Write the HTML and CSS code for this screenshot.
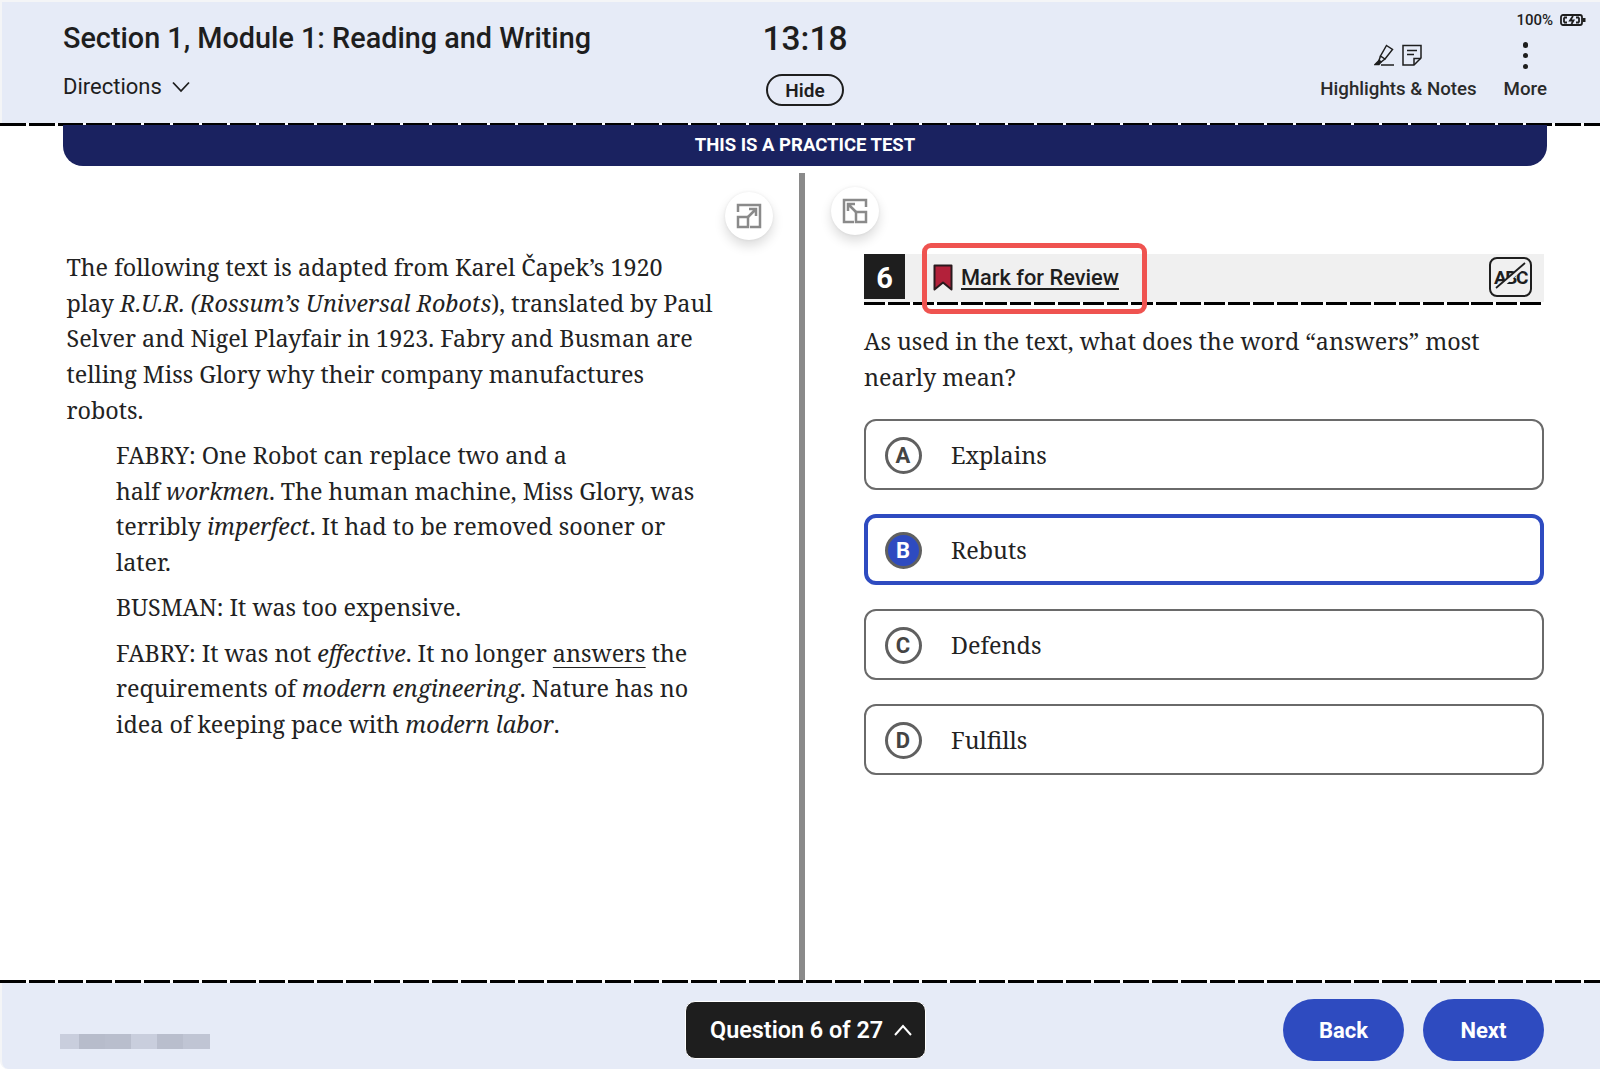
FILE: index.html
```html
<!DOCTYPE html>
<html lang="en">
<head>
<meta charset="utf-8">
<title>Section 1, Module 1: Reading and Writing</title>
<link rel="stylesheet" href="styles.css">
</head>
<body>
<div class="app">
  <header class="topbar">
    <div class="top-left">
      <div class="section-title">Section 1, Module 1: Reading and Writing</div>
      <div class="directions">Directions
        <svg class="chev" width="20" height="12" viewBox="0 0 20 12"><path d="M2 1.500 10 10 18 1.500"/></svg>
      </div>
    </div>
    <div class="top-center">
      <div class="timer">13:18</div>
      <button class="hide">Hide</button>
    </div>
    <div class="top-right">
      <div class="tool tool-notes">
        <div class="tool-icons">
          <svg width="20" height="22" viewBox="0 0 20 22" class="ink"><path d="M12.500 1.500 18.500 5.500 11 15 6.500 12Z"/><path d="M6.500 12 5 16.500 7 18 11 15"/><path d="M5 16.500 1 20.500H5L7 18Z" class="solid"/><path d="M7 21H20"/></svg>
          <svg width="20" height="22" viewBox="0 0 20 22" class="ink"><path d="M19 14V1.500H1V21H12Z"/><path d="M12 21V14.500H19"/><path d="M5 6.500H15M5 10.500H12"/></svg>
        </div>
        <span>Highlights &amp; Notes</span>
      </div>
      <div class="tool tool-more">
        <div class="dots"><i></i><i></i><i></i></div>
        <span>More</span>
      </div>
    </div>
    <div class="status">100%
      <svg width="26" height="12" viewBox="0 0 26 12" class="ink batt"><rect x="1" y="1" width="21" height="10" rx="2"/><path d="M4 3.500V8.500M7 3.500H4M7 8.500H4M19 3.500V8.500M16 3.500H19M16 8.500H19M13 2 10 6.500H13.500L11.500 10"/><path d="M24 4V8" class="thick"/></svg>
    </div>
  </header>
  <div class="dash"></div>
  <div class="banner">THIS IS A PRACTICE TEST</div>
  <main class="panes">
    <section class="pane-left">
      <div class="expand-row">
        <div class="round-btn">
          <svg width="26" height="26" viewBox="0 0 26 26" class="grey"><path d="M2 9V2H24V24H14"/><rect x="2" y="14" width="10" height="10"/><path d="M12 14 20 6M13 6H20V13"/></svg>
        </div>
      </div>
      <div class="passage">
        <p class="intro">The following text is adapted from Karel Čapek’s 1920<br>play <em>R.U.R. (Rossum’s Universal Robots</em>), translated by Paul<br>Selver and Nigel Playfair in 1923. Fabry and Busman are<br>telling Miss Glory why their company manufactures<br>robots.</p>
        <p class="speech">FABRY: One Robot can replace two and a<br>half <em>workmen</em>. The human machine, Miss Glory, was<br>terribly <em>imperfect</em>. It had to be removed sooner or<br>later.</p>
        <p class="speech">BUSMAN: It was too expensive.</p>
        <p class="speech">FABRY: It was not <em>effective</em>. It no longer <u>answers</u> the<br>requirements of <em>modern engineering</em>. Nature has no<br>idea of keeping pace with <em>modern labor</em>.</p>
      </div>
    </section>
    <div class="divider"></div>
    <section class="pane-right">
      <div class="round-btn collapse">
        <svg width="26" height="26" viewBox="0 0 26 26" class="grey"><path d="M24 9V2H2V24H12"/><rect x="14" y="14" width="10" height="10"/><path d="M14 14 6 6M13 6H6V13"/></svg>
      </div>
      <div class="q-head">
        <div class="q-num">6</div>
        <div class="mark">
          <svg width="20" height="27" viewBox="0 0 20 27"><path d="M1.500 1.500H18.500V25.500L10 18.500 1.500 25.500Z" fill="#b3213a" stroke="#2a1a1e" stroke-width="2" stroke-linejoin="round"/></svg>
          <span>Mark for Review</span>
          <div class="highlight-box"></div>
        </div>
        <div class="abc"><span>ABC</span>
          <svg width="38" height="34" viewBox="0 0 38 34" class="strike"><path d="M5 30 33 5" stroke="#f0f0f0" stroke-width="4"/><path d="M4 28 33 3" stroke="#1e1e1e" stroke-width="1.800"/></svg>
        </div>
      </div>
      <div class="q-dash"></div>
      <p class="question">As used in the text, what does the word “answers” most<br>nearly mean?</p>
      <div class="options">
        <div class="option"><span class="letter">A</span><span>Explains</span></div>
        <div class="option selected"><span class="letter">B</span><span>Rebuts</span></div>
        <div class="option"><span class="letter">C</span><span>Defends</span></div>
        <div class="option"><span class="letter">D</span><span>Fulfills</span></div>
      </div>
    </section>
  </main>
  <div class="dash"></div>
  <footer class="bottombar">
    <div class="blur"><i class="b1"></i><i class="b2"></i><i class="b3"></i><i class="b4"></i><i class="b3"></i><i class="b5"></i></div>
    <button class="q-pill"><span>Question 6 of 27</span>
      <svg width="20" height="12" viewBox="0 0 20 12"><path d="M2 11 10 2 18 11"/></svg>
    </button>
    <div class="nav">
      <button class="nav-btn">Back</button>
      <button class="nav-btn">Next</button>
    </div>
  </footer>
</div>
</body>
</html>
```
FILE: styles.css
```css
* { box-sizing: border-box; }
html, body { margin: 0; padding: 0; background: #fff; }
body { font-family: Roboto, "Liberation Sans", sans-serif; color: #1e1e1e; }
button { font-family: inherit; cursor: pointer; }
p { margin: 0; }

.app { width: 1600px; height: 1069px; display: flex; flex-direction: column; overflow: hidden; }

.topbar {
  position: relative;
  height: 123px;
  flex: none;
  display: grid;
  grid-template-columns: 1fr 1fr;
  background: #e6ebf7;
  border-top: 2px solid #f4f5f7;
  border-left: 2px solid #f4f5f7;
}
.top-left { padding: 18px 0 0 61px; }
.section-title { font-size: 28.800px; font-weight: 500; line-height: 36px; }
.directions { margin-top: 18px; font-size: 22px; line-height: 26px; display: flex; align-items: center; gap: 9px; }
.chev { fill: none; stroke: #1e1e1e; stroke-width: 1.800; }

.top-center {
  position: absolute;
  left: 703px; top: 17px; width: 200px;
  display: flex; flex-direction: column; align-items: center;
}
.timer { font-size: 33.500px; font-weight: 500; line-height: 40px; }
.hide {
  margin-top: 15px;
  width: 78px; height: 32px;
  border: 2px solid #1e1e1e; border-radius: 16px;
  background: transparent; color: #1e1e1e;
  font-size: 19px; font-weight: 600; padding: 0;
}

.top-right { grid-column: 2; display: flex; justify-content: flex-end; gap: 27px; padding: 42px 53px 0 0; }
.tool { display: flex; flex-direction: column; align-items: center; font-size: 18.700px; font-weight: 500; color: #2a2a2a; }
.tool span { line-height: 24px; margin-top: 11px; }
.tool-icons { display: flex; gap: 8px; height: 22px; }
.ink { fill: none; stroke: #1e1e1e; stroke-width: 1.500; }
.ink .solid { fill: #1e1e1e; }
.ink .thick { stroke-width: 3; }
.batt { stroke-width: 1.800; }
.dots { height: 27px; margin-top: -2px; margin-bottom: -3px; display: flex; flex-direction: column; justify-content: space-between; }
.dots i { display: block; width: 5.500px; height: 5.500px; border-radius: 50%; background: #1e1e1e; }
.status {
  position: absolute; right: 14px; top: 10px;
  display: flex; align-items: center; gap: 7px;
  font-size: 15px; font-weight: 500; line-height: 16px;
}

.dash {
  flex: none; height: 3px;
  background: repeating-linear-gradient(90deg, #000 0 25.800px, transparent 25.800px 28.800px);
}

.banner {
  flex: none;
  height: 41px;
  margin: -1px 53px 0 63px;
  padding-bottom: 2px;
  background: #1a2260; color: #fff;
  border-radius: 0 0 20px 20px;
  display: flex; align-items: center; justify-content: center;
  font-size: 18.500px; font-weight: 700;
}

.panes { flex: 1; min-height: 0; display: flex; margin-top: 7px; }
.pane-left { width: 799px; flex: none; padding: 0 26px 0 66.500px; }
.divider { width: 6px; flex: none; background: #8a8a8a; }
.pane-right { flex: 1; padding: 14px 56px 0 59px; }

.expand-row { display: flex; justify-content: flex-end; padding-top: 19px; }
.round-btn {
  width: 48px; height: 48px; border-radius: 50%;
  background: #fff;
  box-shadow: 0 6px 12px rgba(0, 0, 0, .14), 0 0 3px rgba(0, 0, 0, .07);
  display: flex; align-items: center; justify-content: center;
}
.collapse { margin-left: -33px; }
.grey { fill: none; stroke: #8a8a8a; stroke-width: 2.500; }

.passage { margin-top: 10px; font-family: "Noto Serif", "DejaVu Serif", "Liberation Serif", serif; font-size: 23.330px; line-height: 35.700px; color: #222; }
.passage p { white-space: nowrap; }
.passage .speech { margin: 9.500px 0 0 49.500px; }
.passage u { text-underline-offset: 5px; text-decoration-thickness: 1px; }

.q-head { position: relative; margin-top: 19px; height: 48px; background: #f0f0f0; display: flex; align-items: flex-start; }
.q-num {
  width: 41px; height: 45px; padding-top: 2px; background: #1e1e1e; color: #fff;
  font-size: 29px; font-weight: 700;
  display: flex; align-items: center; justify-content: center;
}
.mark { position: relative; margin-left: 28px; height: 47px; display: flex; align-items: center; gap: 8px; font-size: 21.800px; font-weight: 500; }
.mark svg { flex: none; }
.mark span { text-decoration: underline; text-underline-offset: 3px; text-decoration-thickness: 1.500px; }
.highlight-box {
  position: absolute; left: -11px; top: -11px; width: 225px; height: 71px;
  border: 5px solid #ef5350; border-radius: 9px; z-index: 2;
}
.abc {
  position: relative;
  margin: 3px 12px 0 auto;
  width: 43px; height: 40px;
  border: 2px solid #1e1e1e; border-radius: 8px;
  display: flex; align-items: center; justify-content: center;
  font-size: 19px; font-weight: 700; letter-spacing: -1.500px;
}
.strike { position: absolute; left: 1px; top: 1px; }
.q-dash {
  height: 3px;
  background: repeating-linear-gradient(90deg, #000 0 21.300px, transparent 21.300px 24.300px);
}

.question { margin-top: 19px; font-family: "Noto Serif", "DejaVu Serif", "Liberation Serif", serif; font-size: 23.330px; line-height: 35.700px; color: #222; white-space: nowrap; }
.options { margin-top: 23.600px; display: flex; flex-direction: column; gap: 24px; }
.option {
  height: 71px;
  border: 2px solid #6a6a6a; border-radius: 12px;
  display: flex; align-items: center; gap: 29.500px; padding-left: 18.500px;
  font-family: "Noto Serif", "DejaVu Serif", "Liberation Serif", serif; font-size: 23.330px; color: #222;
}
.letter {
  width: 37px; height: 37px; flex: none; border-radius: 50%; margin-top: 2px;
  border: 3px solid #606060; color: #444;
  display: flex; align-items: center; justify-content: center;
  font-family: Roboto, sans-serif; font-size: 22px; font-weight: 700;
}
.selected { border: 4px solid #2e4bc0; padding-left: 16.500px; }
.selected .letter { background: #2e4bc0; color: #fff; }

.bottombar {
  flex: none; height: 86px; position: relative;
  background: #e6ebf7;
  border-left: 2px solid #f4f5f7;
  border-radius: 0 0 0 8px;
  display: flex; align-items: center; justify-content: flex-end;
  padding: 8px 56px 0 0;
}
.blur { position: absolute; left: 58px; top: 51px; height: 15px; display: flex; }
.blur i { display: block; height: 15px; }
.b1 { width: 19px; background: #c9cedd; }
.b2 { width: 26px; background: #b7bccb; }
.b3 { width: 26px; background: #b9becd; }
.b4 { width: 26px; background: #c9cedd; }
.b5 { width: 27px; background: #c0c5d4; }

.q-pill {
  position: absolute; left: 683px; top: 18px;
  width: 241px; height: 58px;
  background: #1e1e1e; color: #fff;
  border: 1.500px solid #fff; border-radius: 10px;
  display: flex; align-items: center; justify-content: flex-start; gap: 10px;
  font-size: 23.400px; font-weight: 600; padding: 0 0 0 24px;
}
.q-pill svg { fill: none; stroke: #fff; stroke-width: 2; }
.nav { display: flex; gap: 19px; }
.nav-btn {
  width: 121px; height: 62px; border: none; border-radius: 31px;
  background: #2e4bc0; color: #fff;
  font-size: 22px; font-weight: 700; padding: 0;
}
```
